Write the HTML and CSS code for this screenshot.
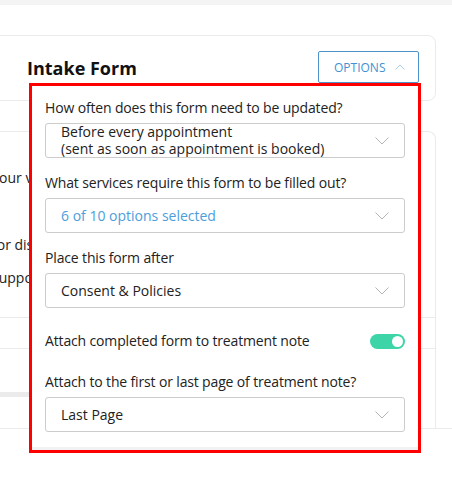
FILE: index.html
```html
<!DOCTYPE html>
<html lang="en">
<head>
    <meta charset="UTF-8">
    <meta name="viewport" content="width=device-width, initial-scale=1.0">
    <title>Intake Form</title>
    <link rel="stylesheet" href="styles.css">
</head>
<body>
    <div class="topbar"></div>
    <div class="page">
        <div class="card head-card">
            <h2>Intake Form</h2>
            <button class="options">OPTIONS
                <svg width="10" height="6" viewBox="0 0 10 6"><path d="M0.5 5.5 L5 1 L9.5 5.5" fill="none" stroke="#a8cbe8" stroke-width="1"/></svg>
            </button>
        </div>
        <div class="card panel">
            <p class="line first">your visit</p>
            <p class="line second">for disp</p>
            <p class="line">support</p>
            <div class="row"></div>
            <div class="scroll"></div>
        </div>
    </div>
    <div class="footer-line"></div>

    <div class="dropdown">
        <div class="dropdown-inner">
            <div class="field">
                <label>How often does this form need to be updated?</label>
                <div class="select tall">
                    <span class="value">Before every appointment<br>(sent as soon as appointment is booked)</span>
                    <svg class="chev" width="14" height="8" viewBox="0 0 14 8"><path d="M0.5 0.5 L7 7 L13.5 0.5" fill="none" stroke="#b5b5b5" stroke-width="1"/></svg>
                </div>
            </div>
            <div class="field">
                <label>What services require this form to be filled out?</label>
                <div class="select">
                    <span class="value blue">6 of 10 options selected</span>
                    <svg class="chev" width="14" height="8" viewBox="0 0 14 8"><path d="M0.5 0.5 L7 7 L13.5 0.5" fill="none" stroke="#b5b5b5" stroke-width="1"/></svg>
                </div>
            </div>
            <div class="field">
                <label>Place this form after</label>
                <div class="select">
                    <span class="value">Consent &amp; Policies</span>
                    <svg class="chev" width="14" height="8" viewBox="0 0 14 8"><path d="M0.5 0.5 L7 7 L13.5 0.5" fill="none" stroke="#b5b5b5" stroke-width="1"/></svg>
                </div>
            </div>
            <div class="toggle-row">
                <span>Attach completed form to treatment note</span>
                <span class="toggle"><span class="knob"></span></span>
            </div>
            <div class="field">
                <label>Attach to the first or last page of treatment note?</label>
                <div class="select">
                    <span class="value">Last Page</span>
                    <svg class="chev" width="14" height="8" viewBox="0 0 14 8"><path d="M0.5 0.5 L7 7 L13.5 0.5" fill="none" stroke="#b5b5b5" stroke-width="1"/></svg>
                </div>
            </div>
        </div>
    </div>
</body>
</html>
```
FILE: styles.css
```css
body {
    font-family: "Open Sans", Arial, sans-serif;
    margin: 0;
    padding: 0;
    background: #fff;
    color: #222;
    overflow: hidden;
}
.topbar {
    height: 5px;
    background: #f4f4f4;
}
.page {
    padding-top: 30px;
}
.card {
    margin: 0 16px 0 -20px;
    border: 1px solid #ebebeb;
    background: #fff;
}
.head-card {
    box-sizing: border-box;
    height: 66px;
    padding: 15px 16px 0 46px;
    border-radius: 8px;
    display: flex;
    justify-content: space-between;
    align-items: flex-start;
}
.head-card h2 {
    margin: 0;
    height: 32px;
    line-height: 34px;
    font-size: 18px;
    font-weight: 700;
    color: #111;
}
.options {
    height: 32px;
    width: 101px;
    padding: 0 0 0 15px;
    display: flex;
    align-items: center;
    gap: 10px;
    border: 1px solid #4d93cb;
    border-radius: 2px;
    background: #fff;
    color: #3f91d3;
    font-family: inherit;
    font-size: 12px;
}
.panel {
    box-sizing: border-box;
    margin-top: 30px;
    height: 297px;
    padding: 36px 0 0 11px;
    border-bottom: none;
    border-radius: 0 8px 0 0;
}
.line {
    margin: 0;
    font-size: 14px;
    line-height: 20px;
    white-space: nowrap;
}
.line.second {
    margin-top: 47px;
    margin-bottom: 13px;
}
.row {
    margin: 29px 0 0 -11px;
    height: 30px;
    border-top: 1px solid #ebebeb;
    border-bottom: 1px solid #ebebeb;
}
.scroll {
    margin: 43px 0 0 -11px;
    width: 300px;
    height: 5px;
    background: #ebebeb;
}
.footer-line {
    border-top: 1px solid #ebebeb;
}
.dropdown {
    position: absolute;
    left: 29px;
    top: 83px;
    width: 392px;
    box-sizing: border-box;
    border: 3px solid #f00;
    background: #fff;
}
.dropdown-inner {
    padding: 12px 13px 15px 13px;
    border-bottom: 3px solid #f2f2f2;
}
.field {
    margin-bottom: 15px;
}
.field:last-child {
    margin-bottom: 0;
}
.field label {
    display: block;
    font-size: 14px;
    line-height: 20px;
    letter-spacing: -0.15px;
    margin-bottom: 5px;
}
.select {
    box-sizing: border-box;
    height: 35px;
    padding: 0 15px;
    border: 1px solid #ccc;
    border-radius: 3px;
    display: flex;
    justify-content: space-between;
    align-items: center;
    font-size: 14px;
    overflow: hidden;
}
.select.tall .value {
    align-self: flex-start;
    line-height: 17px;
    margin-top: -1px;
}
.value.blue {
    color: #4c9edb;
}
.toggle-row {
    margin: 23px 0 21px;
    display: flex;
    justify-content: space-between;
    align-items: center;
    font-size: 14px;
    line-height: 20px;
    letter-spacing: -0.15px;
}
.toggle {
    width: 35px;
    height: 15px;
    border-radius: 8px;
    background: #3dd4a7;
    display: flex;
    align-items: center;
    justify-content: flex-end;
    padding-right: 2px;
    box-sizing: border-box;
}
.knob {
    width: 11px;
    height: 11px;
    border-radius: 50%;
    background: #fff;
}
```
